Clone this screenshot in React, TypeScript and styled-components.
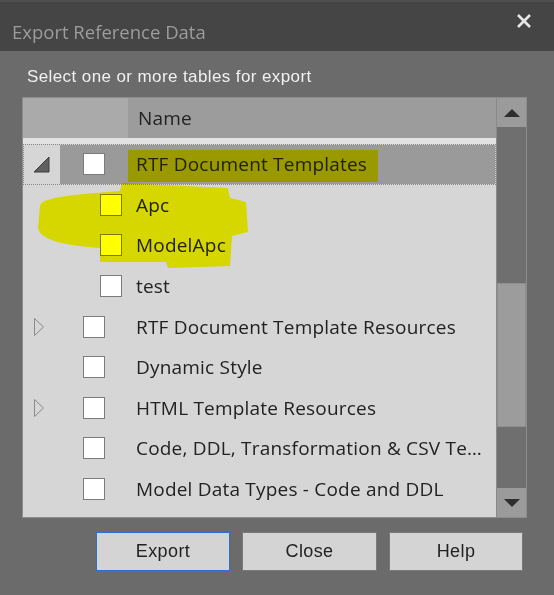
import styled, { createGlobalStyle } from "styled-components";

const GlobalStyle = createGlobalStyle`
    html, body {
        margin: 0;
        padding: 0;
        background: #6b6b6b;
    }
`;

const Window = styled.div`
    position: relative;
    width: 554px;
    height: 595px;
    background: #6b6b6b;
    display: flex;
    flex-direction: column;
    overflow: hidden;
`;

const TitleBar = styled.div`
    height: 51px;
    box-sizing: border-box;
    background: #454545;
    border-top: 2px solid #4f4f4f;
    display: flex;
    justify-content: space-between;
    align-items: flex-start;
    padding: 0 22px 0 12px;
`;

const Title = styled.span`
    margin-top: 18px;
    font-family: "Open Sans", sans-serif;
    font-size: 18.5px;
    line-height: 24px;
    color: #9c9c9c;
`;

const CloseX = styled.svg`
    margin-top: 11px;
    width: 16px;
    height: 16px;
`;

const Body = styled.div`
    flex: 1;
    display: flex;
    flex-direction: column;
    padding: 0 27px 0 22px;
`;

const Prompt = styled.div`
    margin: 16px 0 0 5px;
    height: 30px;
    font-family: "Liberation Sans", Arial, sans-serif;
    font-size: 17px;
    letter-spacing: 0.4px;
    line-height: 20px;
    color: #f0f0f0;
`;

const ListBox = styled.div`
    height: 421px;
    box-sizing: border-box;
    border: 1px solid #8c8c8c;
    display: grid;
    grid-template-columns: 1fr 30px;
    background: #d6d6d6;
`;

const ListContent = styled.div`
    overflow: hidden;
    display: flex;
    flex-direction: column;
`;

const HeaderRow = styled.div`
    flex: none;
    height: 40px;
    display: grid;
    grid-template-columns: 105px 1fr;
`;

const HeaderBlank = styled.div`
    background: #aaaaaa;
`;

const HeaderCell = styled.div`
    background: #9c9c9c;
    display: flex;
    align-items: center;
    padding-left: 10px;
    font-family: "Open Sans", sans-serif;
    font-size: 19px;
    letter-spacing: 0.2px;
    color: #222;
`;

const Band = styled.div`
    flex: none;
    height: 6px;
    background: #e2e2e2;
`;

const Row = styled.div<{ $selected?: boolean }>`
    flex: none;
    height: 40.6px;
    box-sizing: border-box;
    display: grid;
    grid-template-columns: 36px 69px 1fr;
    border: 1px dotted ${(p) => (p.$selected ? "#8a8a8a" : "transparent")};
`;

const Expander = styled.div`
    display: flex;
    align-items: center;
    padding-left: 9px;
`;

const CheckCell = styled.div<{ $selected?: boolean; $depth: number }>`
    display: flex;
    align-items: center;
    padding-left: ${(p) => (p.$depth ? 40 : 23)}px;
    background: ${(p) => (p.$selected ? "#9a9a9a" : "transparent")};
`;

const Box = styled.div`
    width: 20px;
    height: 20px;
    background: #ffffff;
    border: 1px solid #7c7c7c;
`;

const NameCell = styled.div<{ $selected?: boolean }>`
    display: flex;
    align-items: center;
    padding: 0 10px 0 7px;
    min-width: 0;
    background: ${(p) => (p.$selected ? "#9a9a9a" : "transparent")};
    font-family: "Open Sans", sans-serif;
    font-size: 19px;
    letter-spacing: 0.2px;
    color: #222;

    span {
        white-space: nowrap;
        overflow: hidden;
        text-overflow: ellipsis;
    }
`;

const ScrollBar = styled.div`
    background: #6f6f6f;
    border-left: 1px solid #8a8a8a;
    display: flex;
    flex-direction: column;
`;

const ScrollButton = styled.div`
    height: 29px;
    background: #9b9b9b;
    display: flex;
    align-items: center;
    justify-content: center;
`;

const Track = styled.div`
    flex: 1;
    display: flex;
    flex-direction: column;
    padding-top: 156px;
    padding-bottom: 61px;
`;

const Thumb = styled.div`
    flex: 1;
    background: #9c9c9c;
    border: 1px solid #8e8e8e;
`;

const ButtonBar = styled.div`
    display: flex;
    gap: 12px;
    margin: 14px 0 0 74px;
`;

const Button = styled.button<{ $default?: boolean; $w: number }>`
    width: ${(p) => p.$w}px;
    height: 39px;
    background: #d4d4d4;
    border: 1px solid ${(p) => (p.$default ? "#2a72d0" : "#7a7a7a")};
    font-family: "Liberation Sans", Arial, sans-serif;
    font-size: 18px;
    letter-spacing: 0.4px;
    color: #222;
    padding: 0;
`;

const Highlight = styled.svg`
    position: absolute;
    left: 0;
    top: 0;
    width: 554px;
    height: 595px;
    pointer-events: none;
    mix-blend-mode: multiply;
`;

type Item = { name: string; depth: number; expander?: "open" | "closed"; selected?: boolean };

const items: Item[] = [
    { name: "RTF Document Templates", depth: 0, expander: "open", selected: true },
    { name: "Apc", depth: 1 },
    { name: "ModelApc", depth: 1 },
    { name: "test", depth: 1 },
    { name: "RTF Document Template Resources", depth: 0, expander: "closed" },
    { name: "Dynamic Style", depth: 0 },
    { name: "HTML Template Resources", depth: 0, expander: "closed" },
    { name: "Code, DDL, Transformation & CSV Templates", depth: 0 },
    { name: "Model Data Types - Code and DDL", depth: 0 },
    { name: "Model Patterns", depth: 0 },
];

const ExpanderIcon = ({ kind }: { kind?: "open" | "closed" }) => {
    if (kind === "open") {
        return (
            <svg width="17" height="17" viewBox="0 0 17 17">
                <path d="M16 1 L16 16 L1 16 Z" fill="#606060" stroke="#3a3a3a" strokeWidth="1" />
            </svg>
        );
    }
    if (kind === "closed") {
        return (
            <svg width="12" height="20" viewBox="0 0 12 20">
                <path d="M1.5 1.5 L10.5 10 L1.5 18.5 Z" fill="none" stroke="#8a8a8a" strokeWidth="1" />
            </svg>
        );
    }
    return null;
};

const App = () => {
    return (
        <>
            <GlobalStyle />
            <Window>
                <TitleBar>
                    <Title>Export Reference Data</Title>
                    <CloseX viewBox="0 0 16 16">
                        <path d="M2 2 L14 14 M14 2 L2 14" stroke="#e6e6e6" strokeWidth="2.6" />
                    </CloseX>
                </TitleBar>
                <Body>
                    <Prompt>Select one or more tables for export</Prompt>
                    <ListBox>
                        <ListContent>
                            <HeaderRow>
                                <HeaderBlank />
                                <HeaderCell>Name</HeaderCell>
                            </HeaderRow>
                            <Band />
                            {items.map((it) => (
                                <Row key={it.name} $selected={it.selected}>
                                    <Expander>
                                        <ExpanderIcon kind={it.expander} />
                                    </Expander>
                                    <CheckCell $selected={it.selected} $depth={it.depth}>
                                        <Box />
                                    </CheckCell>
                                    <NameCell $selected={it.selected}>
                                        <span>{it.name}</span>
                                    </NameCell>
                                </Row>
                            ))}
                        </ListContent>
                        <ScrollBar>
                            <ScrollButton>
                                <svg width="16" height="8" viewBox="0 0 16 8">
                                    <path d="M8 0 L16 8 L0 8 Z" fill="#2e2e2e" />
                                </svg>
                            </ScrollButton>
                            <Track>
                                <Thumb />
                            </Track>
                            <ScrollButton>
                                <svg width="16" height="8" viewBox="0 0 16 8">
                                    <path d="M0 0 L16 0 L8 8 Z" fill="#2e2e2e" />
                                </svg>
                            </ScrollButton>
                        </ScrollBar>
                    </ListBox>
                    <ButtonBar>
                        <Button $default $w={134}>Export</Button>
                        <Button $w={135}>Close</Button>
                        <Button $w={134}>Help</Button>
                    </ButtonBar>
                </Body>
                <Highlight viewBox="0 0 554 595">
                    <rect x="128" y="150" width="250" height="32" fill="#ffff00" />
                    <path
                        d="M40 206 C40 197 80 194 120 191 L122 183 L228 188 L230 198 L246 202 L248 232 L232 236 L230 266 L168 268 L166 262 L100 262 L100 248 C70 246 40 241 38 228 Z"
                        fill="#ffff00"
                    />
                </Highlight>
            </Window>
        </>
    );
};

export default App;
